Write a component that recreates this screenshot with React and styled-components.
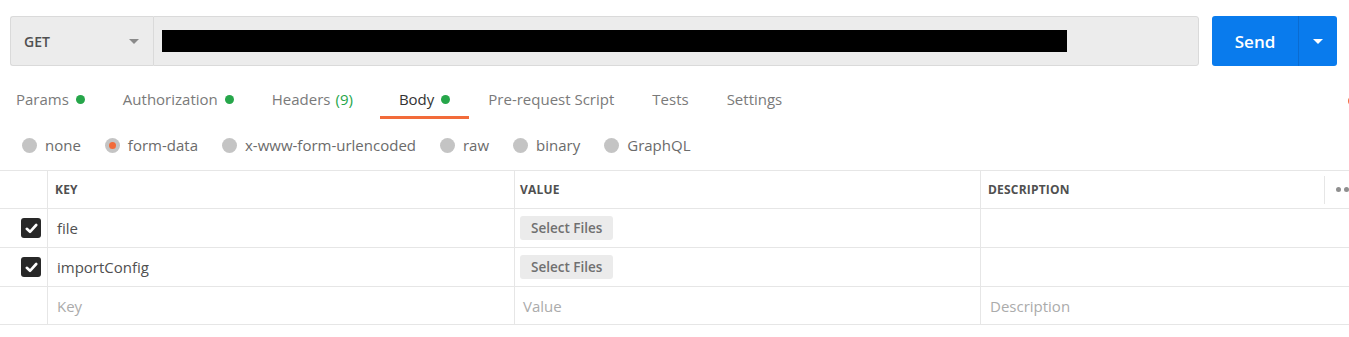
import React from 'react';
import styled, { createGlobalStyle } from 'styled-components';

const GlobalStyle = createGlobalStyle`
  body {
    margin: 0;
    background: #fff;
    font-family: 'Open Sans', 'Liberation Sans', sans-serif;
    overflow: hidden;
  }
`;

const Page = styled.div`
  width: 1349px;
  overflow: hidden;
`;

const UrlBar = styled.div`
  display: flex;
  padding: 16px 12px 0 10px;
  height: 50px;
`;

const MethodSelect = styled.div`
  width: 143px;
  box-sizing: border-box;
  display: flex;
  align-items: center;
  justify-content: space-between;
  padding: 0 14px 0 13px;
  background: #ececec;
  border: 1px solid #dadada;
  border-right: none;
  border-radius: 3px 0 0 3px;
  font-size: 14px;
  font-weight: 600;
  color: #505050;
`;

const Caret = styled.span`
  width: 0;
  height: 0;
  border-left: 5px solid transparent;
  border-right: 5px solid transparent;
  border-top: 5px solid ${p => p.$color || '#8a8a8a'};
`;

const UrlInput = styled.div`
  flex: 1;
  display: flex;
  align-items: center;
  padding-left: 8px;
  background: #ececec;
  border: 1px solid #dadada;
  border-radius: 0 3px 3px 0;
`;

const Redacted = styled.div`
  width: 905px;
  height: 22px;
  background: #000;
`;

const SendGroup = styled.div`
  margin-left: 13px;
  display: flex;
  border-radius: 3px;
  overflow: hidden;
  background: #097bed;
`;

const SendButton = styled.div`
  width: 86px;
  display: flex;
  align-items: center;
  justify-content: center;
  color: #fff;
  font-size: 17px;
  font-weight: 600;
  border-right: 1px solid #0a6bd0;
`;

const SendArrow = styled.div`
  width: 38px;
  display: flex;
  align-items: center;
  justify-content: center;
`;

const Tabs = styled.div`
  display: flex;
  align-items: stretch;
  height: 38px;
  margin-top: 15px;
  margin-left: -3px;
`;

const Tab = styled.div`
  display: flex;
  align-items: center;
  padding: 0 19px;
  font-size: 15px;
  color: ${p => (p.$active ? '#333' : '#7a7a7a')};
  border-bottom: 3px solid ${p => (p.$active ? '#f26b3a' : 'transparent')};
  box-sizing: border-box;
  height: 38px;
  padding-top: 1px;
`;

const Dot = styled.span`
  width: 9px;
  height: 9px;
  border-radius: 50%;
  background: #26a64a;
  margin-left: 7px;
  margin-top: 1px;
`;

const Count = styled.span`
  color: #26a64a;
  margin-left: 5px;
  margin-right: 8px;
`;

const Spacer = styled.div`
  flex: 1;
`;

const Ring = styled.span`
  align-self: center;
  width: 8px;
  height: 8px;
  border: 2px solid #f26b3a;
  border-radius: 50%;
  margin-right: -11px;
  margin-top: 2px;
`;

const Radios = styled.div`
  display: flex;
  align-items: center;
  height: 40px;
  padding-left: 22px;
  margin-top: 6px;
`;

const RadioItem = styled.label`
  display: flex;
  align-items: center;
  font-size: 15px;
  color: #6b6b6b;
  margin-right: 24px;
`;

const RadioCircle = styled.span`
  width: 15px;
  height: 15px;
  border-radius: 50%;
  background: #c4c4c4;
  margin-right: 8px;
  display: flex;
  align-items: center;
  justify-content: center;
  &::after {
    content: '';
    display: ${p => (p.$checked ? 'block' : 'none')};
    width: 7px;
    height: 7px;
    border-radius: 50%;
    background: #f26b3a;
  }
`;

const Table = styled.div`
  margin-top: 5px;
  border-top: 1px solid #e6e6e6;
`;

const Row = styled.div`
  display: grid;
  grid-template-columns: 47px 467px 466px 1fr;
  height: ${p => p.$h || 38}px;
  border-bottom: 1px solid #e6e6e6;
`;

const Cell = styled.div`
  display: flex;
  align-items: center;
  padding-left: ${p => p.$pad ?? 10}px;
  border-left: ${p => (p.$first ? 'none' : '1px solid #e6e6e6')};
  font-size: 15px;
  color: ${p => (p.$placeholder ? '#ababab' : '#505050')};
`;

const HeadCell = styled(Cell)`
  font-size: 12px;
  font-weight: 700;
  letter-spacing: 0.2px;
  color: #505050;
`;

const HeadTools = styled.div`
  margin-left: auto;
  display: flex;
  align-items: center;
  height: 28px;
  border-left: 1px solid #e6e6e6;
  padding-left: 11px;
  gap: 3px;
`;

const SmallDot = styled.span`
  width: 5px;
  height: 5px;
  border-radius: 50%;
  background: #8f8f8f;
`;

const Checkbox = styled.span`
  width: 20px;
  height: 20px;
  border-radius: 3px;
  background: #282828;
  display: flex;
  align-items: center;
  justify-content: center;
`;

const FileButton = styled.span`
  display: inline-flex;
  align-items: center;
  padding: 0 11px;
  height: 24px;
  border-radius: 3px;
  background: #ebebeb;
  color: #707070;
  font-size: 13.5px;
  font-weight: 600;
`;

const Check = () => (
  <Checkbox>
    <svg width="13" height="11" viewBox="0 0 13 11">
      <path d="M1.8 5.8 L5 8.8 L11.2 2" fill="none" stroke="#fff" strokeWidth="2.6" strokeLinecap="round" strokeLinejoin="round" />
    </svg>
  </Checkbox>
);

const rows = [
  { key: 'file' },
  { key: 'importConfig' },
];

const bodyTypes = ['none', 'form-data', 'x-www-form-urlencoded', 'raw', 'binary', 'GraphQL'];

const App = () => {
  return (
    <Page>
      <GlobalStyle />
      <UrlBar>
        <MethodSelect>
          GET
          <Caret />
        </MethodSelect>
        <UrlInput>
          <Redacted />
        </UrlInput>
        <SendGroup>
          <SendButton>Send</SendButton>
          <SendArrow>
            <Caret $color="#fff" />
          </SendArrow>
        </SendGroup>
      </UrlBar>

      <Tabs>
        <Tab>Params<Dot /></Tab>
        <Tab>Authorization<Dot /></Tab>
        <Tab>Headers<Count>(9)</Count></Tab>
        <Tab $active>Body<Dot /></Tab>
        <Tab>Pre-request Script</Tab>
        <Tab>Tests</Tab>
        <Tab>Settings</Tab>
        <Spacer />
        <Ring />
      </Tabs>

      <Radios>
        {bodyTypes.map(t => (
          <RadioItem key={t}>
            <RadioCircle $checked={t === 'form-data'} />
            {t}
          </RadioItem>
        ))}
      </Radios>

      <Table>
        <Row $h={37}>
          <Cell $first />
          <HeadCell $pad={7}>KEY</HeadCell>
          <HeadCell $pad={5}>VALUE</HeadCell>
          <HeadCell $pad={7}>
            DESCRIPTION
            <HeadTools>
              <SmallDot />
              <SmallDot />
            </HeadTools>
          </HeadCell>
        </Row>
        {rows.map(r => (
          <Row key={r.key}>
            <Cell $first $pad={21}><Check /></Cell>
            <Cell $pad={9}>{r.key}</Cell>
            <Cell $pad={5}><FileButton>Select Files</FileButton></Cell>
            <Cell />
          </Row>
        ))}
        <Row $h={37}>
          <Cell $first />
          <Cell $placeholder $pad={9}>Key</Cell>
          <Cell $placeholder $pad={8}>Value</Cell>
          <Cell $placeholder $pad={9}>Description</Cell>
        </Row>
      </Table>
    </Page>
  );
};

export default App;
